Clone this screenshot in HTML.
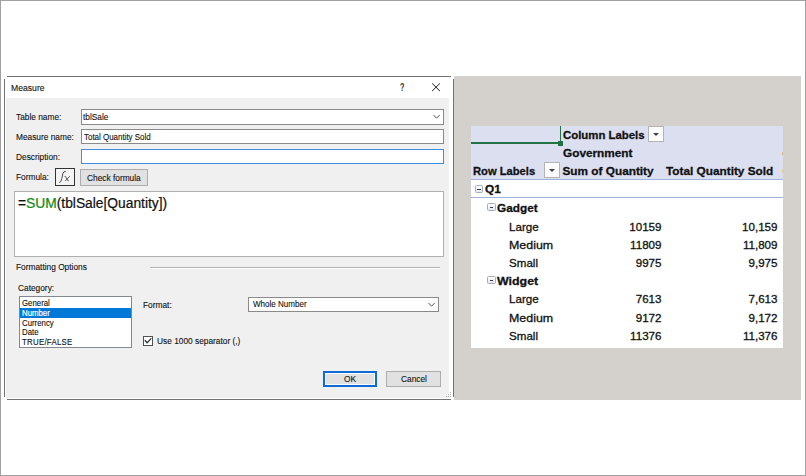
<!DOCTYPE html>
<html><head><meta charset="utf-8">
<style>
html,body{margin:0;padding:0;}
body{width:806px;height:476px;position:relative;overflow:hidden;background:#fff;font-family:"Liberation Sans",sans-serif;}
.a{position:absolute;}
#frame{left:0;top:0;width:804px;height:474px;border:1px solid #a0a0a0;}
#dlg{left:4px;top:76px;width:450px;height:324px;background:#fff;}
.ln{background:#737373;}
#content{left:6px;top:98px;width:443px;height:300px;background:#f0f0f0;}
.t{font-size:9.7px;color:#111;white-space:nowrap;line-height:1;transform:scaleX(.86);transform-origin:0 0;margin-top:-.3px;-webkit-text-stroke:.12px #111;}
.inp{background:#fff;border:1px solid #8a8a8a;box-sizing:border-box;}
.btn{background:#e1e1e1;border:1px solid #adadad;box-sizing:border-box;}
#gray{left:454px;top:76px;width:347px;height:324px;background:#d4d0cb;}
#pv{left:471px;top:126px;width:312px;height:221.5px;background:#fff;}
#hdr{left:471px;top:126px;width:312px;height:53px;background:#dbdff0;}
.hl{left:471px;width:312px;height:1px;background:#9fb3dc;}
.p{font-size:11.6px;color:#111;white-space:nowrap;line-height:1;-webkit-text-stroke:.3px #111;}
.b{font-weight:bold;font-size:11.8px;}
.dd{width:14px;height:14px;border:1px solid #b4b4b4;background:#fbfbfb;}
.dd:after{content:"";position:absolute;left:3.5px;top:6px;border-left:3.5px solid transparent;border-right:3.5px solid transparent;border-top:3.5px solid #404040;}
.r{text-align:right;}
.mb{width:6.5px;height:6px;border:1px solid #a3adbd;border-radius:1.5px;background:linear-gradient(#fdfdfe,#e3e7ee);}
.mb:after{content:"";position:absolute;left:1.5px;top:2.5px;width:3.5px;height:1.2px;background:#333a48;}
</style></head><body>
<div class="a" id="frame"></div>
<div class="a" id="dlg"></div><div class="a ln" style="left:7px;top:76px;width:444px;height:1px;"></div><div class="a ln" style="left:4px;top:79px;width:1px;height:318px;"></div><div class="a ln" style="left:7px;top:399px;width:444px;height:1px;"></div><div class="a ln" style="left:453px;top:79px;width:1px;height:318px;"></div>
<div class="a" id="content"></div>
<!-- title -->
<div class="a t" style="left:11px;top:82.8px;transform:scaleX(.89);">Measure</div>
<div class="a" style="left:400px;top:82.5px;font-size:10px;font-weight:bold;color:#333;line-height:1;transform:scaleX(.72);transform-origin:0 0;">?</div>
<svg class="a" style="left:431px;top:82px" width="10" height="10"><path d="M1.2 1.4L8.9 9M8.9 1.4L1.2 9" stroke="#1a1a1a" stroke-width="1"/></svg>

<div class="a t" style="left:16px;top:112px;">Table name:</div>
<div class="a inp" style="left:81px;top:109px;width:363px;height:16px;"></div>
<div class="a t" style="left:83px;top:112px;">tblSale</div>
<svg class="a" style="left:433px;top:114px" width="8" height="6"><path d="M0.5 1L3.6 4.2L6.7 1" stroke="#505050" fill="none" stroke-width="1"/></svg>

<div class="a t" style="left:16px;top:132px;">Measure name:</div>
<div class="a inp" style="left:81px;top:129px;width:363px;height:15px;"></div>
<div class="a t" style="left:84px;top:132px;transform:scaleX(.82);">Total Quantity Sold</div>

<div class="a t" style="left:16px;top:152px;">Description:</div>
<div class="a inp" style="left:81px;top:149px;width:363px;height:15px;border-color:#3d8ee0;"></div>

<div class="a t" style="left:16px;top:172px;">Formula:</div>
<div class="a" style="left:55px;top:168px;width:18px;height:16px;border:1px solid #333;background:#f4f4f4;"></div>
<svg class="a" style="left:50px;top:164px" width="30" height="26"><path d="M9.2 18.5Q10.9 18.9 11.8 14.5L12.9 9.6Q13.6 7.1 15.8 7.4" stroke="#4a4a4a" stroke-width="1" fill="none"/><path d="M14.6 12.4Q15.4 12 15.9 13L17.5 16.3Q18 17.1 19 16.6M19.8 12.2L15.2 17" stroke="#4a4a4a" stroke-width=".9" fill="none"/></svg>
<div class="a btn" style="left:80px;top:169px;width:68px;height:17px;"></div>
<div class="a t" style="left:87px;top:173px;">Check formula</div>

<div class="a inp" style="left:14px;top:191px;width:430px;height:66px;border-color:#b0b0b0;"></div>
<div class="a" style="left:18px;top:197px;font-size:13.8px;color:#111;line-height:1;white-space:nowrap;-webkit-text-stroke:.2px #111;">=<span style="color:#0e8a0e;-webkit-text-stroke:.2px #0e8a0e;">SUM</span>(tblSale[Quantity])</div>

<div class="a t" style="left:16px;top:262px;">Formatting Options</div>
<div class="a" style="left:150px;top:266.5px;width:290px;height:1px;background:#b4b4b4;"></div><div class="a" style="left:150px;top:267.5px;width:290px;height:1px;background:#fff;"></div>

<div class="a t" style="left:18px;top:283px;">Category:</div>
<div class="a inp" style="left:19px;top:296px;width:113px;height:52px;border-color:#828790;"></div>
<div class="a" style="left:20px;top:308px;width:111px;height:10px;background:#0078d7;"></div>
<div class="a t" style="left:21.5px;top:299.4px;font-size:8.6px;line-height:9.7px;transform:scaleX(.91);">General<br><span style="color:#fff;-webkit-text-stroke:.2px #fff;">Number</span><br>Currency<br>Date<br><span style="letter-spacing:.3px">TRUE/FALSE</span></div>

<div class="a t" style="left:143px;top:300px;">Format:</div>
<div class="a inp" style="left:248px;top:296.5px;width:191px;height:15.5px;"></div>
<div class="a t" style="left:253px;top:299.3px;transform:scaleX(.83);">Whole Number</div>
<svg class="a" style="left:428px;top:301.5px" width="8" height="6"><path d="M0.5 1L3.6 4.2L6.7 1" stroke="#505050" fill="none" stroke-width="1"/></svg>

<div class="a" style="left:143.3px;top:336px;width:8px;height:8px;border:1px solid #505050;background:#fff;"></div>
<svg class="a" style="left:143px;top:335px" width="11" height="11"><path d="M1.8 5.3L4.1 7.7L8.3 3.4" stroke="#333" fill="none" stroke-width="1.3"/></svg>
<div class="a t" style="left:157px;top:336px;">Use 1000 separator (,)</div>

<div class="a btn" style="left:323px;top:371px;width:54px;height:16px;border:2px solid #0f6ad6;box-shadow:inset 0 0 0 1px #fcfcfc;"></div>
<div class="a t" style="left:344px;top:374px;">OK</div>
<div class="a btn" style="left:386px;top:371px;width:55px;height:16px;"></div>
<div class="a t" style="left:401px;top:374px;">Cancel</div>

<div class="a" style="left:450px;top:392px;width:1px;height:1px;background:#a8a8a8;"></div><div class="a" style="left:448px;top:394px;width:1px;height:1px;background:#a8a8a8;"></div><div class="a" style="left:450px;top:394px;width:1px;height:1px;background:#a8a8a8;"></div><div class="a" style="left:446px;top:396px;width:1px;height:1px;background:#a8a8a8;"></div><div class="a" style="left:448px;top:396px;width:1px;height:1px;background:#a8a8a8;"></div><div class="a" style="left:450px;top:396px;width:1px;height:1px;background:#a8a8a8;"></div>
<!-- pivot -->
<div class="a" id="gray"></div>
<div class="a" id="pv"></div>
<div class="a" id="hdr"></div>
<div class="a hl" style="top:179px;"></div>
<div class="a hl" style="top:197px;"></div>
<div class="a" style="left:471px;top:141.5px;width:88px;height:2px;background:#217346;"></div>
<div class="a" style="left:559.5px;top:126px;width:1.5px;height:16px;background:#217346;"></div>
<div class="a" style="left:557.5px;top:140.5px;width:5px;height:5px;background:#217346;"></div>

<div class="a p b" style="left:562.5px;top:129.81px;transform:scaleX(.965);transform-origin:0 0;">Column Labels</div>
<div class="a dd" style="left:648px;top:126px;"></div>
<div class="a p b" style="left:563px;top:148.01px;">Government</div>
<div class="a p b" style="left:473px;top:166.21px;transform:scaleX(.948);transform-origin:0 0;">Row Labels</div>
<div class="a dd" style="left:544px;top:162px;"></div>
<div class="a p b" style="left:562.5px;top:166.21px;">Sum of Quantity</div>
<div class="a p b" style="left:666px;top:166.21px;">Total Quantity Sold</div>
<div class="a mb" style="left:474.5px;top:185px;"></div>
<div class="a p b" style="left:485px;top:184.41px;">Q1</div>
<div class="a mb" style="left:487.3px;top:203px;"></div>
<div class="a p b" style="left:497px;top:202.61px;">Gadget</div>
<div class="a mb" style="left:487.3px;top:276px;"></div>
<div class="a p b" style="left:497px;top:275.41px;transform:scaleX(1.05);transform-origin:0 0;margin-top:.6px;">Widget</div>
<div class="a p" style="left:509px;top:220.68px;">Large</div>
<div class="a p" style="left:509px;top:238.88px;transform:scaleX(1.07);transform-origin:0 0;">Medium</div>
<div class="a p" style="left:509px;top:257.08px;">Small</div>
<div class="a p" style="left:509px;top:293.48px;">Large</div>
<div class="a p" style="left:509px;top:311.68px;transform:scaleX(1.07);transform-origin:0 0;">Medium</div>
<div class="a p" style="left:509px;top:329.88px;">Small</div>
<div class="a p r" style="left:581.5px;width:80px;top:220.68px;">10159</div>
<div class="a p r" style="left:697.5px;width:80px;top:220.68px;">10,159</div>
<div class="a p r" style="left:581.5px;width:80px;top:238.88px;">11809</div>
<div class="a p r" style="left:697.5px;width:80px;top:238.88px;">11,809</div>
<div class="a p r" style="left:581.5px;width:80px;top:257.08px;">9975</div>
<div class="a p r" style="left:697.5px;width:80px;top:257.08px;">9,975</div>
<div class="a p r" style="left:581.5px;width:80px;top:293.48px;">7613</div>
<div class="a p r" style="left:697.5px;width:80px;top:293.48px;">7,613</div>
<div class="a p r" style="left:581.5px;width:80px;top:311.68px;">9172</div>
<div class="a p r" style="left:697.5px;width:80px;top:311.68px;">9,172</div>
<div class="a p r" style="left:581.5px;width:80px;top:329.88px;">11376</div>
<div class="a p r" style="left:697.5px;width:80px;top:329.88px;">11,376</div>
<div class="a" style="left:782px;top:152px;width:1px;height:3px;background:#e2b877;"></div><div class="a" style="left:782px;top:169px;width:1px;height:4px;background:#e6cf9a;"></div>
</body></html>
